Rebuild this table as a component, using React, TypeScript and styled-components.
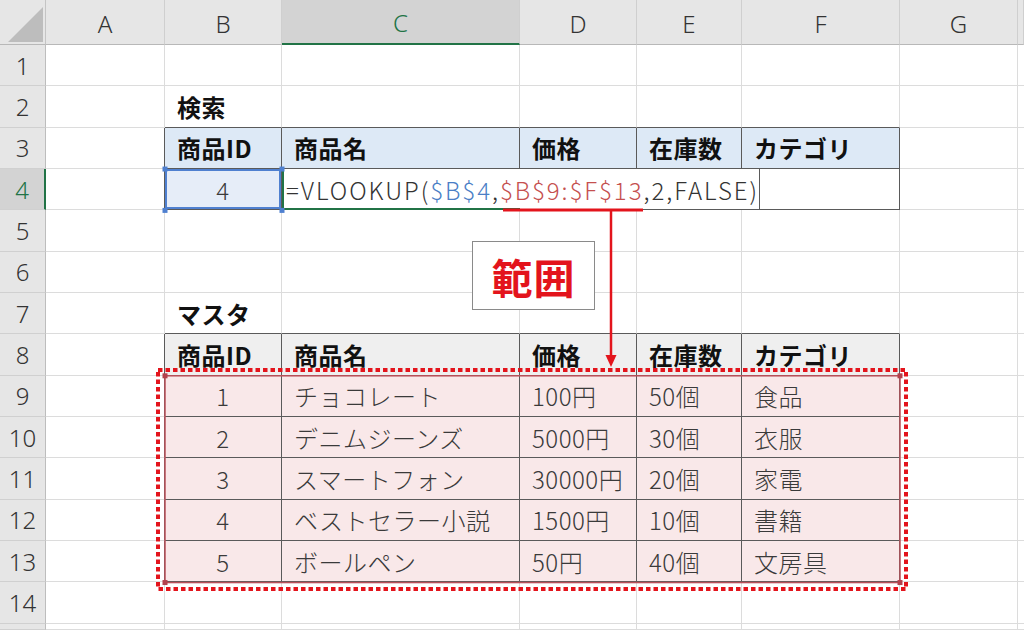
import React from 'react';
import styled, { createGlobalStyle, css } from 'styled-components';

const COLS = [46, 119, 117, 238, 117, 105, 158, 118, 6];
const ROW_H = 41.35;
const HEAD_H = 45;
const rowTop = (n: number) => HEAD_H + (n - 1) * ROW_H;

const GRID = '#dcdcdc';
const DARK = '#5a5a5a';
const GREEN = '#217346';
const RED = '#e3141c';

const GlobalStyle = createGlobalStyle`
  html, body { margin: 0; padding: 0; background: #fff; overflow: hidden; }
  * { box-sizing: border-box; }
  body { font-family: "Noto Sans CJK JP", "Noto Sans", sans-serif; }
`;

const Sheet = styled.div`
  position: relative;
  width: 1024px;
  height: 630px;
  overflow: hidden;
  display: grid;
  grid-template-columns: ${COLS.map((c) => c + 'px').join(' ')};
  grid-template-rows: ${HEAD_H}px repeat(14, ${ROW_H}px) 1fr;
  font-family: "Noto Sans CJK JP", "Noto Sans", sans-serif;
  font-size: 24px;
  letter-spacing: 0.5px;
  color: #3a3a3a;
`;

const Corner = styled.div`
  position: relative;
  background: #e6e6e6;
  border-right: 1px solid #c4c4c4;
  border-bottom: 1px solid #b8b8b8;
  &::after {
    content: '';
    position: absolute;
    left: 8px;
    top: 7px;
    width: 35px;
    height: 35px;
    background: #bdbdbd;
    clip-path: polygon(100% 0, 100% 100%, 0 100%);
  }
`;

const ColHead = styled.div<{ $active?: boolean }>`
  display: flex;
  align-items: center;
  justify-content: center;
  background: ${(p) => (p.$active ? '#d3d3d3' : '#e6e6e6')};
  color: ${(p) => (p.$active ? GREEN : '#333')};
  border-right: 1px solid #cfcfcf;
  border-bottom: ${(p) => (p.$active ? `2px solid ${GREEN}` : '1px solid #b8b8b8')};
  font-size: 24px;
  font-weight: 300;
  letter-spacing: 0;
  font-family: "Noto Sans", "Noto Sans CJK JP", sans-serif;
  padding-top: 2px;
`;

const RowHead = styled.div<{ $active?: boolean }>`
  display: flex;
  align-items: center;
  justify-content: center;
  background: ${(p) => (p.$active ? '#d3d3d3' : '#e6e6e6')};
  color: ${(p) => (p.$active ? GREEN : '#333')};
  border-right: ${(p) => (p.$active ? `2px solid ${GREEN}` : '1px solid #bdbdbd')};
  border-bottom: 1px solid #d0d0d0;
  font-size: 24px;
  font-weight: 300;
  letter-spacing: 0;
  font-family: "Noto Sans", "Noto Sans CJK JP", sans-serif;
`;

type Tone = 'plain' | 'searchHead' | 'masterHead' | 'pink' | 'selected';

const toneBg: Record<Tone, string> = {
  plain: '#fff',
  searchHead: '#dde9f6',
  masterHead: '#efefef',
  pink: '#f9e8e9',
  selected: '#e6edf8',
};

const Cell = styled.div<{
  $tone: Tone;
  $rightDark?: boolean;
  $bottomDark?: boolean;
  $center?: boolean;
  $bold?: boolean;
}>`
  display: flex;
  align-items: center;
  justify-content: ${(p) => (p.$center ? 'center' : 'flex-start')};
  padding: 0 12px;
  white-space: nowrap;
  overflow: visible;
  background: ${(p) => toneBg[p.$tone]};
  border-right: 1px solid ${(p) => (p.$rightDark ? DARK : GRID)};
  border-bottom: 1px solid ${(p) => (p.$bottomDark ? DARK : GRID)};
  font-weight: ${(p) => (p.$bold ? 700 : 300)};
  color: ${(p) => (p.$bold ? '#111' : '#3a3a3a')};
  ${(p) =>
    p.$tone === 'selected' &&
    css`
      box-shadow: inset 0 0 0 2px #4f80d0;
    `}
`;

const EditCell = styled.div`
  grid-column: span 4;
  display: flex;
  background: #fff;
  border-right: 1px solid ${DARK};
  border-bottom: 1px solid ${DARK};
`;

const EditBox = styled.div`
  position: relative;
  flex: 0 0 475px;
  display: flex;
  align-items: center;
  padding-left: 4px;
  border-right: 1px solid ${DARK};
  box-shadow: inset 2px 0 0 ${GREEN};
  white-space: nowrap;
  color: #333;
  font-weight: 300;
  letter-spacing: 1.95px;
  &::after {
    content: '';
    position: absolute;
    left: 0;
    bottom: -1px;
    width: 238px;
    height: 2px;
    background: ${GREEN};
  }
`;

const Ref = styled.span<{ $tone: 'blue' | 'red' }>`
  color: ${(p) => (p.$tone === 'blue' ? '#4a7ec6' : '#c5504f')};
`;

const Callout = styled.div`
  position: absolute;
  left: 472px;
  top: 241px;
  width: 123px;
  height: 69px;
  display: flex;
  align-items: center;
  justify-content: center;
  background: #fff;
  border: 1px solid #8a8a8a;
  color: ${RED};
  font-weight: 700;
  font-size: 41px;
  letter-spacing: 1px;
`;

const Overlay = styled.svg`
  position: absolute;
  left: 0;
  top: 0;
  pointer-events: none;
`;

const LETTERS = ['A', 'B', 'C', 'D', 'E', 'F', 'G', ''];
const searchHead = ['商品ID', '商品名', '価格', '在庫数', 'カテゴリ'];
const master = [
  ['1', 'チョコレート', '100円', '50個', '食品'],
  ['2', 'デニムジーンズ', '5000円', '30個', '衣服'],
  ['3', 'スマートフォン', '30000円', '20個', '家電'],
  ['4', 'ベストセラー小説', '1500円', '10個', '書籍'],
  ['5', 'ボールペン', '50円', '40個', '文房具'],
];

const isTable = (r: number, c: number) =>
  ((r >= 3 && r <= 4) || (r >= 8 && r <= 13)) && c >= 2 && c <= 6;

function cellInfo(r: number, c: number): { text: string; tone: Tone; center?: boolean; bold?: boolean } {
  if (r === 2 && c === 2) return { text: '検索', tone: 'plain', bold: true };
  if (r === 7 && c === 2) return { text: 'マスタ', tone: 'plain', bold: true };
  if (r === 3 && c >= 2 && c <= 6) return { text: searchHead[c - 2], tone: 'searchHead', bold: true };
  if (r === 8 && c >= 2 && c <= 6) return { text: searchHead[c - 2], tone: 'masterHead', bold: true };
  if (r === 4 && c === 2) return { text: '4', tone: 'selected', center: true };
  if (r >= 9 && r <= 13 && c >= 2 && c <= 6)
    return { text: master[r - 9][c - 2], tone: 'pink', center: c === 2 };
  return { text: '', tone: 'plain' };
}

const Handles: React.FC<{ x: number; y: number; w: number; h: number; color: string }> = ({ x, y, w, h, color }) => (
  <>
    {[
      [x, y],
      [x + w, y],
      [x, y + h],
      [x + w, y + h],
    ].map(([hx, hy], i) => (
      <rect key={i} x={hx - 2.5} y={hy - 2.5} width={5} height={5} fill={color} />
    ))}
  </>
);

export default function App() {
  const cells: React.ReactNode[] = [];
  cells.push(<Corner key="corner" />);
  LETTERS.forEach((l, i) => (
    cells.push(<ColHead key={'h' + i} $active={l === 'C'}>{l}</ColHead>)
  ));
  for (let r = 1; r <= 15; r++) {
    cells.push(
      <RowHead key={'r' + r} $active={r === 4}>
        {r <= 14 ? r : ''}
      </RowHead>
    );
    for (let c = 1; c <= 8; c++) {
      if (r === 4 && c >= 3 && c <= 6) {
        if (c === 3) {
          cells.push(
            <EditCell key={`c${r}-${c}`}>
              <EditBox>
                =VLOOKUP(<Ref $tone="blue">$B$4</Ref>,<Ref $tone="red">$B$9:$F$13</Ref>,2,FALSE)
              </EditBox>
            </EditCell>
          );
        }
        continue;
      }
      const info = cellInfo(r, c);
      cells.push(
        <Cell
          key={`c${r}-${c}`}
          $tone={info.tone}
          $center={info.center}
          $bold={info.bold}
          $rightDark={isTable(r, c) || isTable(r, c + 1)}
          $bottomDark={isTable(r, c) || isTable(r + 1, c)}
        >
          {info.text}
        </Cell>
      );
    }
  }

  const y9 = rowTop(9);
  const y14 = rowTop(14);

  return (
    <>
      <GlobalStyle />
      <Sheet>
        {cells}
        <Overlay width={1024} height={630} viewBox="0 0 1024 630">
          <rect x={165} y={y9} width={735} height={y14 - y9} fill="none" stroke="#b9505a" strokeWidth={1.5} />
          <Handles x={165} y={y9} w={735} h={y14 - y9} color="#b4414c" />
          <Handles x={165} y={rowTop(4)} w={117} h={ROW_H} color="#4f80d0" />
          <rect
            x={158}
            y={370}
            width={748}
            height={219}
            fill="none"
            stroke={RED}
            strokeWidth={4}
            strokeDasharray="4.5 3"
          />
          <line x1={503} y1={210} x2={643} y2={210} stroke={RED} strokeWidth={3} />
          <line x1={611} y1={210} x2={611} y2={357} stroke={RED} strokeWidth={2.5} />
          <polygon points="605.5,355 616.5,355 611,367" fill={RED} />
        </Overlay>
        <Callout>範囲</Callout>
      </Sheet>
    </>
  );
}
